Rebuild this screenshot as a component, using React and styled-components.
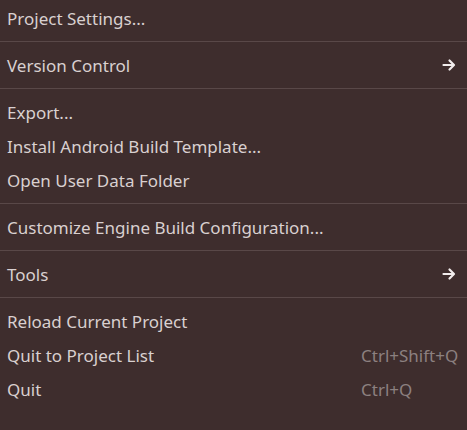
import React from 'react';
import styled, { createGlobalStyle } from 'styled-components';

const GlobalStyle = createGlobalStyle`
  html, body {
    margin: 0;
    padding: 0;
    background: #3e2d2d;
  }
`;

const Menu = styled.div`
  width: 467px;
  height: 430px;
  box-sizing: border-box;
  padding-top: 1px;
  background: #3e2d2d;
  font-family: "Noto Sans", "Open Sans", sans-serif;
  font-size: 17px;
  color: #d9d0d0;
  display: flex;
  flex-direction: column;
`;

const Item = styled.div`
  height: 34px;
  display: flex;
  align-items: center;
  justify-content: space-between;
  padding: 0 10px 0 7px;
  flex-shrink: 0;
`;

const Shortcut = styled.span`
  color: #8c8080;
  width: 96px;
  white-space: nowrap;
`;

const Separator = styled.div`
  height: 13px;
  display: flex;
  align-items: center;
  flex-shrink: 0;

  &::after {
    content: "";
    flex: 1;
    height: 1px;
    background: #594848;
  }
`;

const Arrow = () => (
  <svg width="14" height="14" viewBox="0 0 14 14" style={{ marginRight: 1 }}>
    <path d="M1.5 7H11.5M7.5 2.5L12 7L7.5 11.5" fill="none" stroke="#f2eded" strokeWidth="2.2" strokeLinecap="round" strokeLinejoin="round" />
  </svg>
);

const menu = [
  { label: 'Project Settings...' },
  'sep',
  { label: 'Version Control', sub: true },
  'sep',
  { label: 'Export...' },
  { label: 'Install Android Build Template...' },
  { label: 'Open User Data Folder' },
  'sep',
  { label: 'Customize Engine Build Configuration...' },
  'sep',
  { label: 'Tools', sub: true },
  'sep',
  { label: 'Reload Current Project' },
  { label: 'Quit to Project List', shortcut: 'Ctrl+Shift+Q' },
  { label: 'Quit', shortcut: 'Ctrl+Q' },
];

export default function App() {
  return (
    <>
      <GlobalStyle />
      <Menu>
        {menu.map((m, i) =>
          m === 'sep' ? (
            <Separator key={i} />
          ) : (
            <Item key={i}>
              <span>{m.label}</span>
              {m.sub && <Arrow />}
              {m.shortcut && <Shortcut>{m.shortcut}</Shortcut>}
            </Item>
          )
        )}
      </Menu>
    </>
  );
}
